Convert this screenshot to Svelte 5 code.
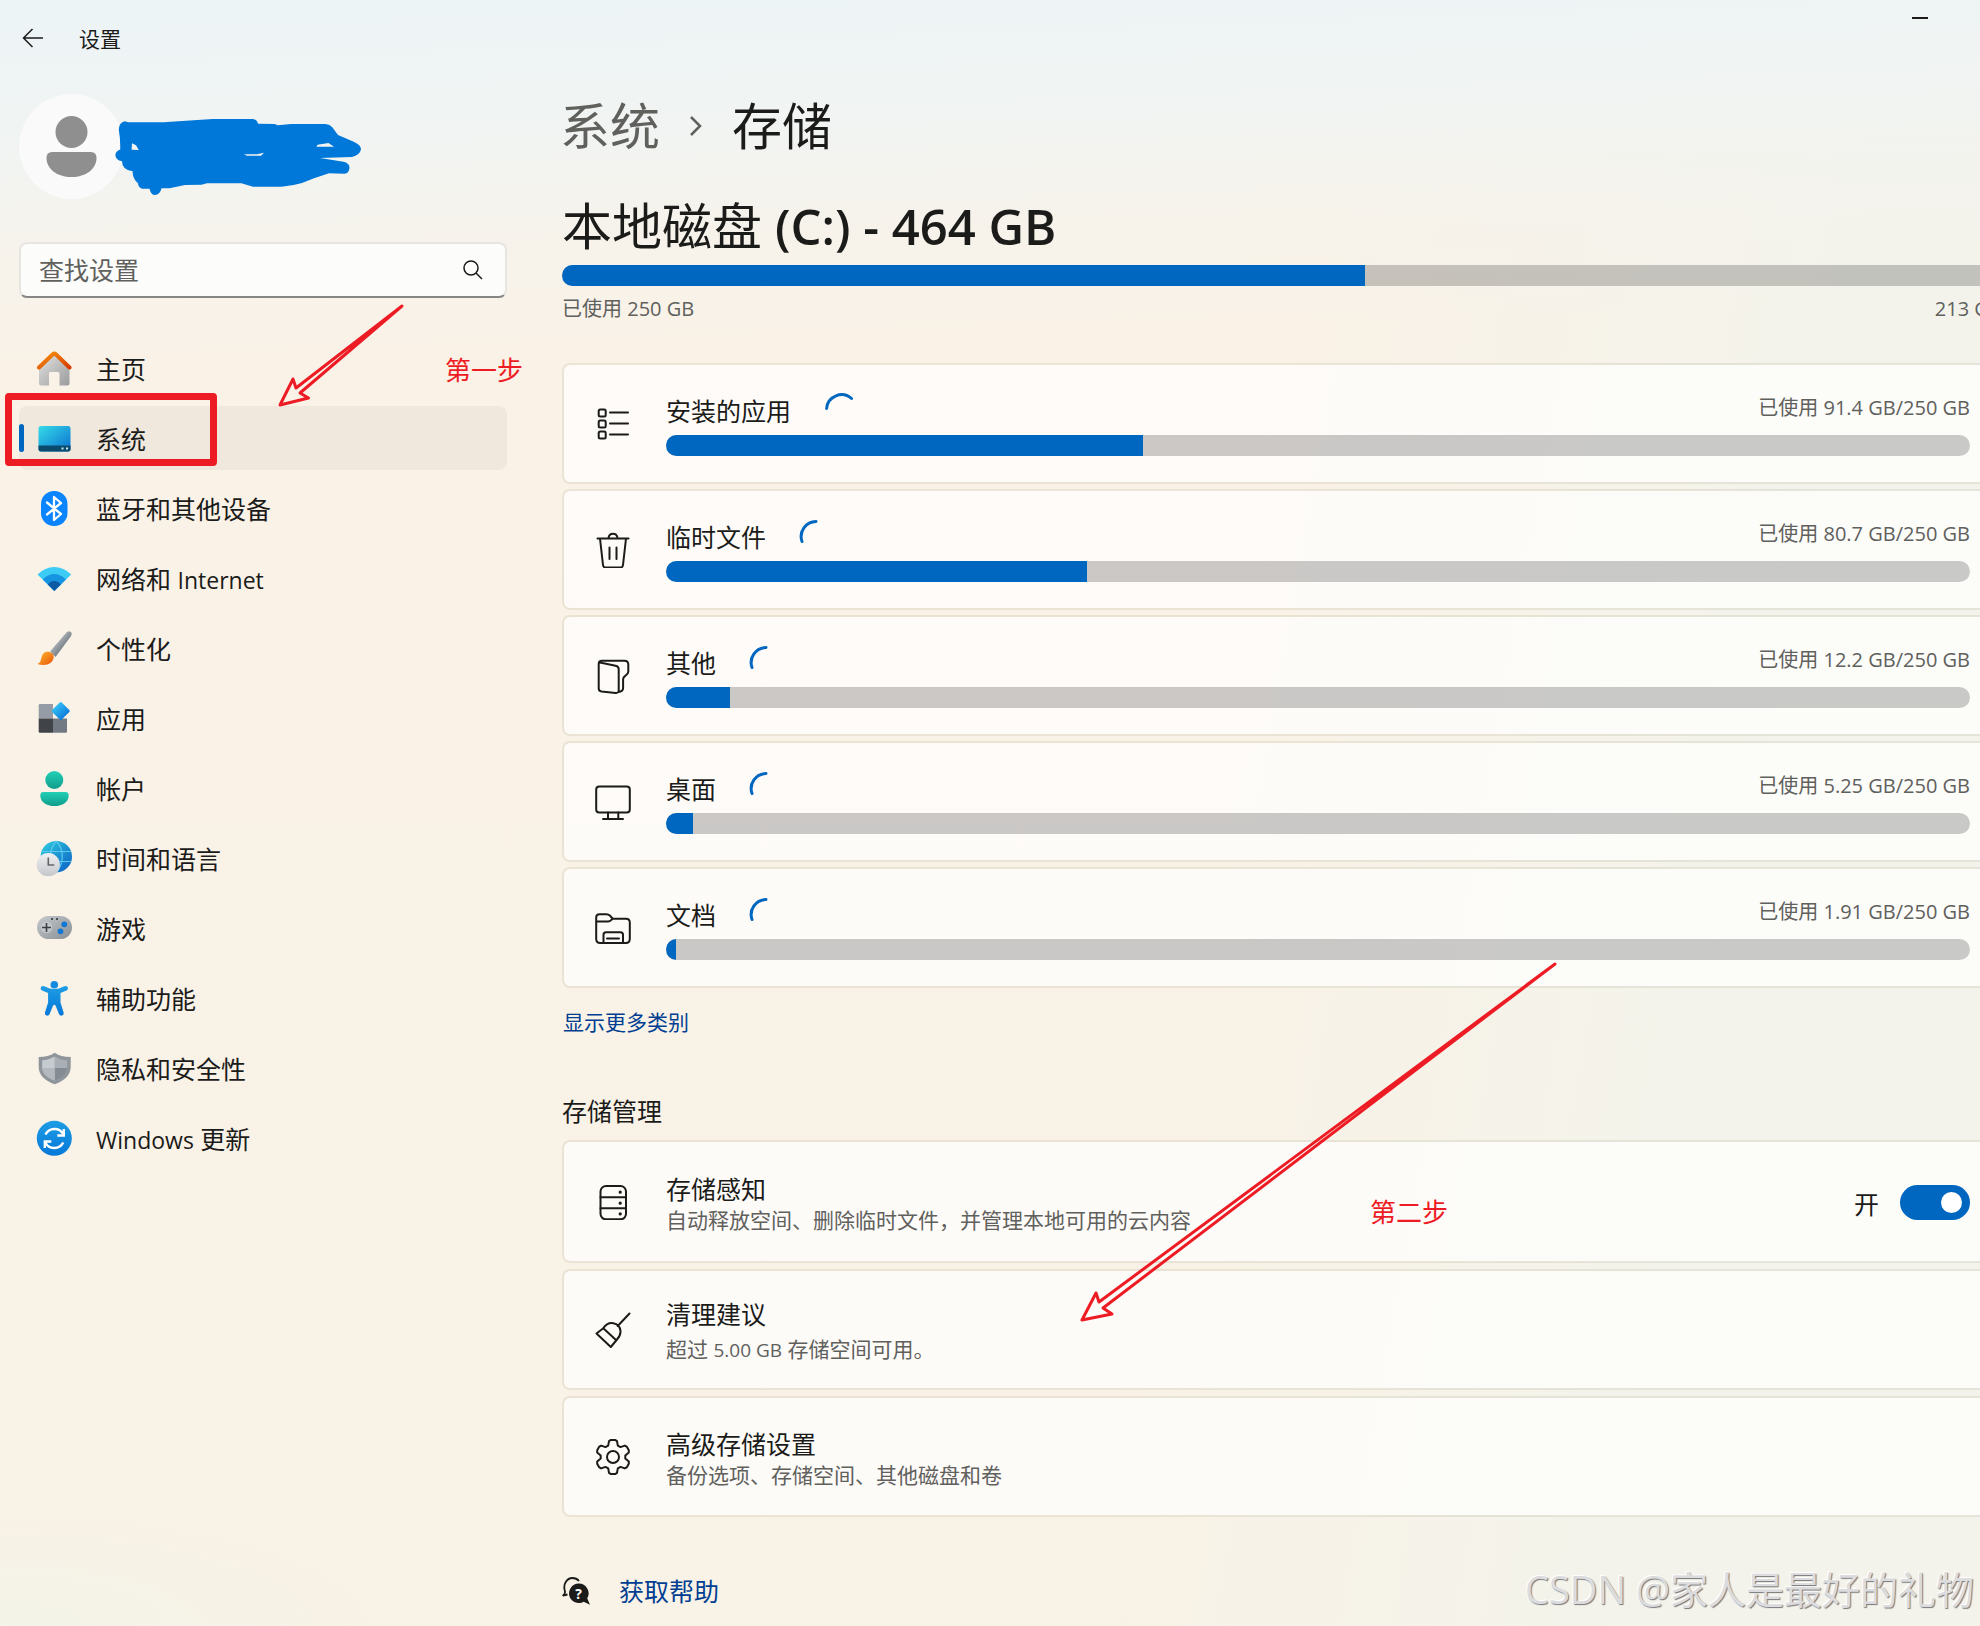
<!--
  StorageSettings — the Storage page of the system settings window:
  sidebar navigation on the left, disk usage and storage management on
  the right, with the two how-to steps marked on top.

  The main column is wider than the window and runs off its right edge.
-->
<script lang="ts">
  type NavItem = { id: string; label: string };
  type Category = { id: string; name: string; used: string; arc: string };

  const navItems: NavItem[] = [
    { id: 'home', label: '主页' },
    { id: 'system', label: '系统' },
    { id: 'bluetooth', label: '蓝牙和其他设备' },
    { id: 'network', label: '网络和 Internet' },
    { id: 'personal', label: '个性化' },
    { id: 'apps', label: '应用' },
    { id: 'accounts', label: '帐户' },
    { id: 'time', label: '时间和语言' },
    { id: 'gaming', label: '游戏' },
    { id: 'access', label: '辅助功能' },
    { id: 'privacy', label: '隐私和安全性' },
    { id: 'update', label: 'Windows 更新' }
  ];

  const diskTotal = 464;
  const diskUsed = 250;

  const wideArc = 'M2.6 15.5A15 15 0 0 1 27.5 5.5';
  const shortArc = 'M3 22.5A15 15 0 0 1 17 2.6';

  const categories: Category[] = [
    { id: 'installed', name: '安装的应用', used: '91.4', arc: wideArc },
    { id: 'temp', name: '临时文件', used: '80.7', arc: shortArc },
    { id: 'other', name: '其他', used: '12.2', arc: shortArc },
    { id: 'desktop', name: '桌面', used: '5.25', arc: shortArc },
    { id: 'documents', name: '文档', used: '1.91', arc: shortArc }
  ];

  let current = $state('system');
  let query = $state('');
  let senseOn = $state(true);

  // Six-toothed cog centred on 18,18
  function cog(): string {
    const points: string[] = [];
    for (let i = 0; i < 6; i++) {
      for (const [offset, r] of [[-23, 12.4], [-14, 16.4], [-7, 17.2], [7, 17.2], [14, 16.4], [23, 12.4]]) {
        const a = ((i * 60 - 90 + offset) * Math.PI) / 180;
        points.push(`${(18 + r * Math.cos(a)).toFixed(1)} ${(18 + r * Math.sin(a)).toFixed(1)}`);
      }
    }
    return `M${points.join('L')}Z`;
  }

  // Latin runs are set slightly smaller than the Chinese around them
  function runs(text: string): string[] {
    return text.split(/([A-Za-z0-9.]+(?: [A-Za-z0-9.]+)*)/).filter(Boolean);
  }
</script>

{#snippet mixed(text: string)}
  {#each runs(text) as run}{#if /^[A-Za-z0-9]/.test(run)}<span class="latin">{run}</span>{:else}{run}{/if}{/each}
{/snippet}

{#snippet navIcon(id: string)}
  <svg class="icon" viewBox="0 0 36 36" aria-hidden="true">
    {#if id === 'home'}
      <path d="M18.3 5L3 19v14.5a2 2 0 0 0 2 2h8V23.500q0-1.500 1.500-1.500h7.500q1.500 0 1.500 1.500v12h8a2 2 0 0 0 2-2V19z" fill="url(#g-steel)" />
      <path d="M3 17.500L16.800 4.200q1.500-1.300 3 0L33.500 17.500" fill="none" stroke="url(#g-roof)" stroke-width="4" stroke-linecap="round" />
    {:else if id === 'system'}
      <rect x="2.500" y="6" width="32" height="25.500" rx="2.500" fill="url(#g-screen)" />
      <path d="M2.500 25.500h32V29a2.500 2.500 0 0 1-2.500 2.500H5A2.500 2.500 0 0 1 2.500 29z" fill="#0b4a6c" />
      <path d="M25.500 27.500h2v2h-2zM30 27.500h2v2h-2z" fill="#c8e6f0" />
    {:else if id === 'bluetooth'}
      <rect x="5" y="1" width="26.500" height="35" rx="13" fill="#0a84ff" />
      <path d="M11 12.500l14 11.500-7 6V7l7 6-14 11.500" fill="none" stroke="#fff" stroke-width="2.300" stroke-linejoin="round" stroke-linecap="round" />
    {:else if id === 'network'}
      <path d="M1.500 14.500Q9 7 18.300 7t16.900 7.500L18.300 31z" fill="#3ccbf4" />
      <path d="M6.800 19.500Q12 14 18.300 14t11.600 5.500L18.300 31z" fill="#1694e2" />
      <path d="M11.800 24.500Q14.500 21 18.300 21t6.600 3.500L18.300 31z" fill="#0c59a4" />
    {:else if id === 'personal'}
      <path d="M14 21.500L30.500 2.500q2.200-2 4.200-.7 1.900 1.700.2 4.400L19.500 27z" fill="url(#g-handle)" />
      <path d="M1.500 34c2.500-1 3.200-3 4-6.500 1-5 4.500-6.500 8-5.500 4.500 1.500 5.500 5.500 2.500 9.500-3 3.800-9.500 4.300-14.500 2.500z" fill="url(#g-flame)" />
    {:else if id === 'apps'}
      <path d="M4 4h13v14.500H2.700V5.300Q2.700 4 4 4z" fill="#959ca5" />
      <path d="M2.700 18.500H17v14.200H4q-1.300 0-1.300-1.300z" fill="#404448" />
      <path d="M17 18.500h14v12.900q0 1.300-1.300 1.300H17z" fill="#737982" />
      <path d="M23.700 2.400q1-1 2 0l7.600 7.600q1 1 0 2l-7.600 7.600q-1 1-2 0L16.100 12q-1-1 0-2z" fill="url(#g-azure)" />
    {:else if id === 'accounts'}
      <circle cx="18.300" cy="10" r="9" fill="url(#g-teal)" />
      <path d="M7.300 22h22q3.400 0 3.400 3.400C32.700 32 26.500 36 18.500 36S4.300 32 4.300 25.400Q4.300 22 7.300 22z" fill="url(#g-teal)" />
    {:else if id === 'time'}
      <circle cx="20.300" cy="16.700" r="15.700" fill="url(#g-globe)" />
      <path d="M6 11.500h29M6 21.500h29.500M20.300 1c-8 9-8 22 0 31.400M20.300 1c8 9 8 22 0 31.400" fill="none" stroke="#5cc8f0" stroke-width="1.200" />
      <circle cx="12.300" cy="24.700" r="11.600" fill="url(#g-dial)" />
      <path d="M12.300 17.500v7.500h6" fill="none" stroke="#63676b" stroke-width="1.600" />
    {:else if id === 'gaming'}
      <rect x="1" y="6" width="35" height="23" rx="11.500" fill="url(#g-pad)" />
      <circle cx="10.500" cy="17.500" r="5.800" fill="#cdd0d3" opacity=".7" />
      <path d="M10.500 13v9M6 17.500h9" stroke="#3c4044" stroke-width="1.600" />
      <circle cx="28.300" cy="14.300" r="2.900" fill="#0f78d4" />
      <circle cx="24.500" cy="21.300" r="2.900" fill="#0f78d4" />
      <path d="M15 8h2v2h-2zM20 8h2v2h-2z" fill="#4b5055" />
    {:else if id === 'access'}
      <circle cx="18.300" cy="4.700" r="3.800" fill="#138ade" />
      <path d="M5.300 6.600Q7 5.500 9 6.600q4.500 2.500 9.300 2.500T27.600 6.600q2-1.100 3.700 0 1.700 2.500-.8 4L24.500 13v9.500l3.200 10.200q.3 2.300-1.800 2.900-2 .3-2.800-1.400L19.500 25.500q-1.200-1.600-2.400 0l-3.600 8.700q-.8 1.700-2.800 1.400-2.100-.6-1.800-2.900l3.200-10.200V13L6.100 10.600q-2.500-1.500-.8-4z" fill="url(#g-azure2)" />
    {:else if id === 'privacy'}
      <path d="M18.700 2.700C23 5.800 28 7 34.700 7v10c0 8.500-6.500 14-16 17.200C9.200 31 2.700 25.500 2.700 17V7c6.700 0 11.700-1.200 16-4.300z" fill="#8f959b" />
      <path d="M18.700 6.500C23 9 26.500 10 31.200 10.200V17c0 6.300-4.700 10.700-12.500 13.500z" fill="#a9afb5" />
      <path d="M18.700 6.500C14.400 9 10.900 10 6.200 10.200V17c0 6.300 4.700 10.700 12.500 13.500z" fill="#c6cbd0" />
      <path d="M18.700 18h12.400c-.5 6-5.200 10-12.400 12.500z" fill="#858b92" />
      <path d="M18.700 18H6.300c.5 6 5.200 10 12.400 12.500z" fill="#b3b8be" />
    {:else}
      <circle cx="18.300" cy="18.300" r="17.500" fill="url(#g-azure2)" />
      <path d="M9.500 14.500C13 7.500 23.500 7 27 14M27.800 9v6.500h-6.500M27.200 22.500c-3.500 7-14 7.500-17.500.500M8.800 28v-6.500h6.500" fill="none" stroke="#fff" stroke-width="2.400" />
    {/if}
  </svg>
{/snippet}

{#snippet lineIcon(id: string)}
  <svg class="icon line" viewBox="0 0 36 36" aria-hidden="true">
    {#if id === 'installed'}
      <rect x="3.700" y="3.500" width="7" height="7" rx="1.500" />
      <rect x="3.700" y="14.500" width="7" height="7" rx="1.500" />
      <rect x="3.700" y="25.500" width="7" height="7" rx="1.500" />
      <path d="M15 6.500h18M15 17.500h18M15 28.500h18" />
    {:else if id === 'temp'}
      <path d="M2.500 6.500h31M13.500 6.500c0-6.500 9-6.500 9 0M5 6.500l3 26.500q.3 2.500 2.500 2.500h15q2.200 0 2.500-2.500l3-26.500M14.500 15.500V27M21.500 15.500V27" />
    {:else if id === 'other'}
      <path d="M5 4.500L20.500 7.800q3.200.7 3.200 3.400v21q0 3-3 2.700L6.500 33.400q-2.800-.4-2.800-3V6q0-3.300 3.300-3.300h22.500q3.800 0 3.800 3.800v7q0 1.500-1.200 2.600l-2.800 2.700q-1.200 1.200-1.200 2.700v8.500q0 3.500-4.800 4" />
    {:else if id === 'desktop'}
      <rect x="1.200" y="2.500" width="33.600" height="26" rx="3" />
      <path d="M13 28.500V35M23.300 28.500V35M8 35h20" />
    {:else if id === 'documents'}
      <path d="M1.200 11.500V7.500q0-3.300 3.300-3.300h7q2 0 3.300 1.300l3 3.200H31q3.800 0 3.800 3.800V29q0 4-4 4H5.200q-4 0-4-4zM1.200 11.500H13q2 0 3.200-1.500l1.300-1.300M8.500 33v-8.300q0-2.500 2.500-2.500h14.500q2.500 0 2.500 2.500V33M12 28.500h12" />
    {:else if id === 'sense'}
      <rect x="5.500" y="2" width="25.500" height="33.300" rx="5.500" />
      <path d="M5.500 13.300H31M5.500 24.300H31" />
      <path d="M25.200 8v.2M25.200 19v.2M25.200 29.800v.2" stroke-width="3.200" />
    {:else if id === 'cleanup'}
      <path d="M34.500 1.500L22.700 14M1.500 21.500l6.800-5.200C13 8.500 24.500 9.500 25.500 19c.2 4-1.500 6.500-3.500 8.500L15.800 35zM8.300 16.300L21 28" />
    {:else}
      <path d={cog()} />
      <circle cx="18" cy="18" r="6" />
    {/if}
  </svg>
{/snippet}

<svg class="defs" width="0" height="0" aria-hidden="true">
  <defs>
    <linearGradient id="g-steel" x1="0" y1="0" x2="1" y2="1"><stop stop-color="#e2e2e2" /><stop offset="1" stop-color="#9b9b9b" /></linearGradient>
    <linearGradient id="g-roof" x1="0" y1="0" x2="1" y2="1"><stop stop-color="#f7920b" /><stop offset="1" stop-color="#d83b01" /></linearGradient>
    <linearGradient id="g-screen" x1="0" y1="0" x2="1" y2="1"><stop stop-color="#35dbe8" /><stop offset="1" stop-color="#0a6fd0" /></linearGradient>
    <linearGradient id="g-handle" x1="0" y1="0" x2="1" y2="1"><stop offset=".3" stop-color="#b4bac0" /><stop offset=".7" stop-color="#6d747b" /></linearGradient>
    <linearGradient id="g-flame" x1="0" y1="0" x2="1" y2="1"><stop stop-color="#ffb92e" /><stop offset="1" stop-color="#e8540a" /></linearGradient>
    <linearGradient id="g-azure" x1="0" y1="0" x2="1" y2="1"><stop offset=".2" stop-color="#35c1f5" /><stop offset=".85" stop-color="#0b74d8" /></linearGradient>
    <linearGradient id="g-azure2" x1="0" y1="0" x2="0" y2="1"><stop stop-color="#1e9de4" /><stop offset="1" stop-color="#0678d9" /></linearGradient>
    <linearGradient id="g-teal" x1="0" y1="0" x2="0" y2="1"><stop stop-color="#22d0b6" /><stop offset="1" stop-color="#0f9d8b" /></linearGradient>
    <linearGradient id="g-globe" x1="0" y1="0" x2="1" y2="1"><stop stop-color="#2fd0e0" /><stop offset="1" stop-color="#0a5cc4" /></linearGradient>
    <linearGradient id="g-dial" x1="0" y1="0" x2="0" y2="1"><stop stop-color="#f0f0f1" /><stop offset="1" stop-color="#c4c7cb" /></linearGradient>
    <linearGradient id="g-pad" x1="0" y1="0" x2="1" y2="1"><stop stop-color="#c6cacd" /><stop offset="1" stop-color="#888e94" /></linearGradient>
  </defs>
</svg>

<div class="window">
  <header class="titlebar">
    <button type="button" class="back" aria-label="返回">
      <svg width="22" height="20" viewBox="0 0 22 20"><path d="M10.500 1L1.500 10l9 9M1.500 10H21" /></svg>
    </button>
    <span class="app-name">设置</span>
    <button type="button" class="minimize" aria-label="最小化"></button>
  </header>

  <div class="layout">
    <aside class="sidebar">
      <div class="account">
        <svg class="avatar" viewBox="0 0 105 105" aria-hidden="true">
          <circle cx="52.500" cy="52.500" r="52.500" fill="#fafafa" />
          <circle cx="52.500" cy="38" r="16" fill="#8f8f8f" />
          <path d="M33 58h39q5.500 0 5.500 6C77.500 75 67 83 52.500 83S27.500 75 27.500 64q0-6 5.500-6z" fill="#8f8f8f" />
        </svg>
        <svg class="scribble" viewBox="0 0 248 78" aria-hidden="true">
          <path
            fill-rule="evenodd"
            d="M4.800 13Q4.500 6 11 4.300L14 5.300H49.600L98.500 2H139Q143 2.500 144 6.700L160.500 7 164 8.300 177 7H211.500Q216 7.500 218.300 10.300L224 18 239.700 24.700Q247 28 247 32.300 246 38 238 40L206 41 229.400 44.700Q235.500 46 235.500 50.700 235 56.500 230.400 56.700L215 56.300 200 61.300 188 66Q178 69 167.400 69.700H139L127.400 66.300H93L87.500 67.700 71 68 55.500 71.300H47.500Q46 78 41 78 37 78 35.500 71.700H28Q24 70 24 66.300 18.600 62 18.600 54.300 8 53 8 44.300 1.400 43 1.400 38.300 1.500 34 6.200 32.500 6.500 22 4.800 13zM18 26.300l4 2 2.800 4.700-7.200-.3zM203.500 27.700l11-1.700 5.500 3.700h-17.500zM130 37.300h13l7-1.600-3 3h-14z"
          />
        </svg>
      </div>

      <label class="search">
        <input type="search" aria-label="查找设置" placeholder="查找设置" bind:value={query} />
        <svg width="20" height="20" viewBox="0 0 20 20" aria-hidden="true">
          <circle cx="8" cy="8" r="7" />
          <path d="M13 13l6 6" />
        </svg>
      </label>

      <nav aria-label="设置">
        {#each navItems as item (item.id)}
          <a
            class="nav-item"
            class:active={item.id === current}
            href="#{item.id}"
            onclick={() => (current = item.id)}
          >
            {@render navIcon(item.id)}
            <span>{@render mixed(item.label)}</span>
          </a>
        {/each}
      </nav>
    </aside>

    <main>
      <div class="breadcrumb">
        <a href="#system">系统</a>
        <svg width="14" height="22" viewBox="0 0 14 22" aria-hidden="true"><path d="M2 2l9 9-9 9" /></svg>
        <span>存储</span>
      </div>

      <h1>本地磁盘 <strong>(C:) - {diskTotal} GB</strong></h1>
      <div class="bar"><div class="fill" style:width="{(diskUsed / diskTotal) * 100}%"></div></div>
      <div class="totals">
        <span>已使用 {diskUsed} GB</span>
        <span>213 GB 可用</span>
      </div>

      <div class="categories">
        {#each categories as c (c.id)}
          <a class="card" href="#{c.id}">
            {@render lineIcon(c.id)}
            <div class="usage">
              <div class="usage-head">
                <span class="name">{c.name}</span>
                <svg class="ring" viewBox="0 0 34 34" aria-hidden="true"><path d={c.arc} /></svg>
                <span class="stat">已使用 {c.used} GB/{diskUsed} GB</span>
              </div>
              <div class="bar"><div class="fill" style:width="{(Number(c.used) / diskUsed) * 100}%"></div></div>
            </div>
          </a>
        {/each}
      </div>

      <a class="more" href="#more">显示更多类别</a>

      <h2>存储管理</h2>
      <div class="management">
        <div class="card sense">
          {@render lineIcon('sense')}
          <div class="text">
            <span class="name">存储感知</span>
            <span class="desc">自动释放空间、删除临时文件，并管理本地可用的云内容</span>
          </div>
          <label class="toggle">
            {senseOn ? '开' : '关'}
            <input type="checkbox" role="switch" aria-label="存储感知" bind:checked={senseOn} />
          </label>
        </div>
        <a class="card" href="#cleanup">
          {@render lineIcon('cleanup')}
          <div class="text spaced">
            <span class="name">清理建议</span>
            <span class="desc">{@render mixed('超过 5.00 GB 存储空间可用。')}</span>
          </div>
        </a>
        <a class="card" href="#advanced">
          {@render lineIcon('advanced')}
          <div class="text">
            <span class="name">高级存储设置</span>
            <span class="desc">备份选项、存储空间、其他磁盘和卷</span>
          </div>
        </a>
      </div>

      <a class="help" href="#help">
        <svg width="28" height="28" viewBox="0 0 28 28" aria-hidden="true">
          <path d="M3 14.500C.500 7 5 1 10.500 1q4 0 6.500 3M3 14.500q.3 2-1.800 4l4.300-1" fill="none" stroke="#1b1b1a" stroke-width="1.800" stroke-linejoin="round" />
          <path d="M16.700 6.500a9.800 9.800 0 1 0 5 18.300l6.300 2.900-2.800-6.400a9.800 9.800 0 0 0-8.500-14.800z" fill="#1b1b1a" />
          <text x="16.700" y="21.500" text-anchor="middle">?</text>
        </svg>
        获取帮助
      </a>
    </main>
  </div>

  <!-- Step markers drawn over the page -->
  <svg class="arrows" width="1600" height="1340" viewBox="0 0 1600 1340" aria-hidden="true">
    <path d="M402 306L296 388 293 379 280 405 308.500 398 300 393z" />
    <path d="M1555 964L1099 1302 1096 1293 1082 1320 1112 1314 1103 1308z" />
  </svg>
  <div class="frame"></div>
  <span class="step first">第一步</span>
  <span class="step second">第二步</span>
  <span class="watermark">CSDN @家人是最好的礼物</span>
</div>

<style>
  :global(body) {
    margin: 0;
  }

  .window {
    --ink: #1b1b1a;
    --ink-soft: #60605d;
    --accent: #0067c0;
    --link: #003e92;
    --mark: #ed1c24;
    position: relative;
    box-sizing: border-box;
    min-height: 100vh;
    overflow: hidden;
    color: var(--ink);
    font-family: 'Open Sans', 'Noto Sans CJK SC', sans-serif;
    font-size: 25px;
    font-weight: 400;
    background:
      radial-gradient(ellipse 400px 120px at 0 100%, #f3f3e8, transparent),
      linear-gradient(178deg, #edf4f6 1%, #f1f4f2 9%, rgba(244, 243, 238, 0.6) 15%, rgba(250, 242, 231, 0) 22%),
      linear-gradient(100deg, rgba(243, 243, 235, 0) 60%, #f3f3eb 84%),
      linear-gradient(#faf2e7, #f9f2e6);
  }

  .defs {
    position: absolute;
  }

  a {
    color: inherit;
    text-decoration: none;
  }

  .icon {
    width: 36px;
    height: 36px;
    flex: none;
  }
  .line {
    fill: none;
    stroke: var(--ink);
    stroke-width: 2;
    stroke-linecap: round;
    stroke-linejoin: round;
  }

  .latin {
    font-size: 23px;
  }
  .desc .latin {
    font-size: 19px;
  }

  .titlebar {
    display: flex;
    align-items: center;
    height: 76px;
    padding: 0 52px 0 22px;
  }
  .titlebar button {
    padding: 0;
    border: none;
    background: none;
  }
  .back {
    display: flex;
  }
  .back svg {
    fill: none;
    stroke: var(--ink);
    stroke-width: 1.5;
  }
  .app-name {
    margin-left: 35px;
    font-size: 21px;
  }
  .titlebar .minimize {
    align-self: flex-start;
    width: 16px;
    height: 19px;
    margin-left: auto;
    border-bottom: 2px solid var(--ink);
  }

  .layout {
    display: grid;
    grid-template-columns: 488px 1fr;
    gap: 55px;
    padding-left: 19px;
  }

  .sidebar {
    padding-top: 18px;
  }

  .account {
    display: flex;
    align-items: center;
  }
  .avatar {
    width: 105px;
    height: 105px;
  }
  .scribble {
    width: 248px;
    height: 78px;
    margin: 0 0 -18px -10px;
    fill: #0078d9;
    position: relative;
  }

  .search {
    display: flex;
    align-items: center;
    box-sizing: border-box;
    height: 56px;
    margin-top: 43px;
    padding: 0 22px 0 18px;
    border: 2px solid #e6e5e1;
    border-bottom-color: #868684;
    border-radius: 8px;
    background: #fcfcfa;
  }
  .search input {
    flex: 1;
    min-width: 0;
    padding: 0;
    border: none;
    outline: none;
    background: none;
    color: var(--ink);
    font: inherit;
  }
  .search input::placeholder {
    color: var(--ink-soft);
    opacity: 1;
  }
  .search svg {
    fill: none;
    stroke: var(--ink);
    stroke-width: 1.5;
  }

  nav {
    display: flex;
    flex-direction: column;
    gap: 6px;
    margin-top: 38px;
  }
  .nav-item {
    display: flex;
    align-items: center;
    gap: 24px;
    height: 64px;
    padding-left: 17px;
    border-radius: 8px;
    position: relative;
  }
  .nav-item:hover,
  .nav-item.active {
    background: rgba(0, 0, 0, 0.04);
  }
  .nav-item.active::before {
    content: '';
    position: absolute;
    left: 0;
    top: 18px;
    bottom: 18px;
    width: 5px;
    border-radius: 3px;
    background: var(--accent);
  }

  /* Runs past the right edge of the window */
  main {
    min-width: 0;
    margin-right: -72px;
    padding-top: 20px;
  }

  .breadcrumb {
    display: flex;
    align-items: center;
    margin-left: -2px;
    font-size: 50px;
    line-height: 60px;
  }
  .breadcrumb a {
    color: var(--ink-soft);
  }
  .breadcrumb svg {
    margin: 0 29px;
    fill: none;
    stroke: var(--ink-soft);
    stroke-width: 2.5;
  }

  h1 {
    margin: 40px 0 9px;
    font-size: 50px;
    font-weight: 400;
    line-height: 60px;
  }
  h1 strong {
    font-size: 49px;
    font-weight: 600;
  }

  .bar {
    height: 21px;
    border-radius: 11px;
    overflow: hidden;
    background: rgba(0, 0, 0, 0.2);
  }
  .fill {
    height: 100%;
    background: var(--accent);
  }

  .totals {
    display: flex;
    justify-content: space-between;
    margin-top: 9px;
    padding-right: 5px;
    font-size: 20px;
    line-height: 28px;
    color: var(--ink-soft);
  }

  .categories,
  .management {
    display: flex;
    flex-direction: column;
    gap: 5px;
  }
  .categories {
    margin-top: 40px;
  }
  .management {
    gap: 6px;
  }

  .card {
    display: flex;
    align-items: center;
    gap: 35px;
    box-sizing: border-box;
    min-height: 121px;
    padding: 0 80px 0 31px;
    border: 2px solid rgba(60, 50, 0, 0.08);
    border-radius: 8px;
    background: rgba(255, 255, 255, 0.7);
    background-clip: padding-box;
  }

  .usage {
    flex: 1;
    padding-top: 3px;
  }
  .usage-head {
    display: flex;
    align-items: center;
    height: 30px;
    margin-bottom: 10px;
  }
  .ring {
    width: 34px;
    height: 34px;
    margin-left: 33px;
    fill: none;
    stroke: var(--accent);
    stroke-width: 3;
    stroke-linecap: round;
  }
  .stat {
    align-self: flex-start;
    margin-left: auto;
    font-size: 20px;
    line-height: 26px;
    color: var(--ink-soft);
  }

  .more {
    display: table;
    margin: 20px 0 0 1px;
    font-size: 21px;
    line-height: 28px;
    color: var(--link);
  }

  h2 {
    margin: 57px 0 11px;
    font-size: 25px;
    font-weight: 400;
    line-height: 36px;
  }

  .sense {
    min-height: 123px;
  }
  .text {
    display: flex;
    flex-direction: column;
    flex: 1;
    padding-top: 4px;
  }
  .text .name {
    line-height: 32px;
  }
  .spaced {
    gap: 4px;
  }
  .desc {
    font-size: 21px;
    line-height: 30px;
    color: var(--ink-soft);
  }

  .toggle {
    display: flex;
    align-items: center;
    gap: 21px;
    padding-top: 2px;
  }
  .toggle input {
    appearance: none;
    width: 70px;
    height: 35px;
    margin: 0;
    padding: 7px 8px;
    box-sizing: border-box;
    border-radius: 18px;
    background: #8a8a88;
  }
  .toggle input::before {
    content: '';
    display: block;
    width: 21px;
    height: 21px;
    border-radius: 50%;
    background: #fff;
  }
  .toggle input:checked {
    background: var(--accent);
  }
  .toggle input:checked::before {
    margin-left: auto;
  }

  .help {
    display: flex;
    align-items: center;
    gap: 29px;
    width: max-content;
    margin-top: 56px;
    line-height: 36px;
    color: var(--link);
  }
  .help text {
    fill: #fff;
    font-size: 14px;
    font-weight: 700;
  }

  .arrows {
    position: absolute;
    top: 0;
    left: 0;
    fill: none;
    stroke: var(--mark);
    stroke-width: 3;
    stroke-linejoin: round;
    pointer-events: none;
  }
  .frame {
    position: absolute;
    left: 5px;
    top: 393px;
    width: 198px;
    height: 59px;
    border: 7px solid var(--mark);
    border-radius: 4px;
    pointer-events: none;
  }
  .step {
    position: absolute;
    font-size: 26px;
    line-height: 36px;
    color: var(--mark);
  }
  .first {
    left: 445px;
    top: 352px;
  }
  .second {
    left: 1370px;
    top: 1194px;
  }

  .watermark {
    position: absolute;
    right: 6px;
    bottom: 11px;
    font-size: 38px;
    line-height: 52px;
    color: #dcdcde;
    text-shadow:
      1px 1px 1px #77777a,
      -1px -1px 1px #fff;
  }
</style>
